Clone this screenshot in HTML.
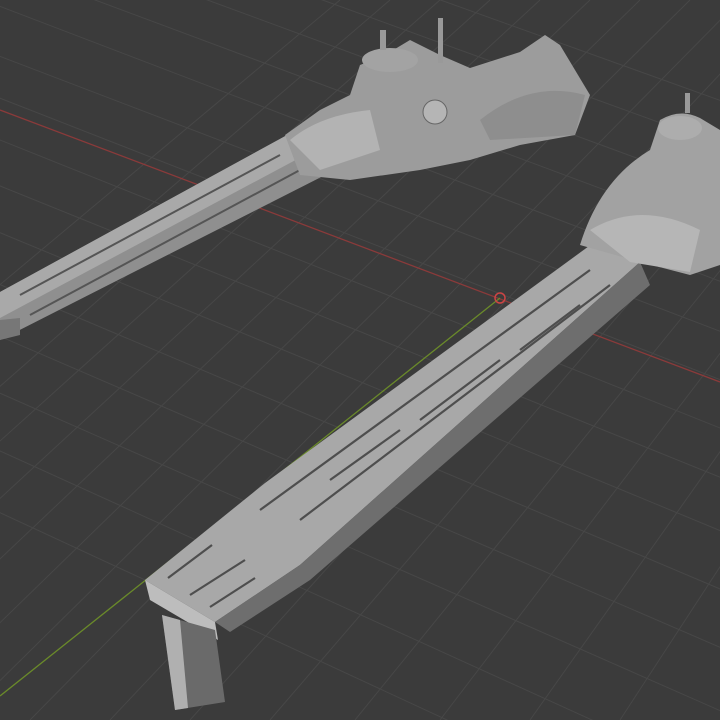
<!DOCTYPE html>
<html><head><style>html,body{margin:0;padding:0;background:#3b3b3b;overflow:hidden;width:720px;height:720px}svg{display:block;overflow:hidden;position:absolute;left:0;top:0}</style></head>
<body>
<svg width="720" height="720" viewBox="0 0 720 720" xmlns="http://www.w3.org/2000/svg">
<rect width="720" height="720" fill="#3b3b3b"/>
<g stroke="#474747" stroke-width="1">
<line x1="-200" y1="-20" x2="900" y2="400"/><line x1="-200" y1="20" x2="900" y2="450"/>
<line x1="-200" y1="60" x2="900" y2="500"/><line x1="-200" y1="105" x2="900" y2="550"/>
<line x1="-200" y1="150" x2="900" y2="605"/><line x1="-200" y1="200" x2="900" y2="665"/>
<line x1="-200" y1="250" x2="900" y2="725"/><line x1="-200" y1="305" x2="900" y2="790"/>
<line x1="-200" y1="360" x2="900" y2="860"/><line x1="-200" y1="420" x2="900" y2="930"/>
<line x1="-200" y1="-70" x2="900" y2="350"/><line x1="-200" y1="-110" x2="900" y2="300"/>
<line x1="-200" y1="-150" x2="900" y2="255"/><line x1="-200" y1="-190" x2="900" y2="210"/>
<line x1="-200" y1="-230" x2="900" y2="165"/>
<line x1="-100" y1="720" x2="640" y2="0"/><line x1="-40" y1="720" x2="690" y2="0"/>
<line x1="30" y1="720" x2="740" y2="0"/><line x1="110" y1="720" x2="790" y2="0"/>
<line x1="190" y1="720" x2="840" y2="0"/><line x1="270" y1="720" x2="890" y2="0"/>
<line x1="355" y1="720" x2="940" y2="0"/><line x1="440" y1="720" x2="990" y2="0"/>
<line x1="530" y1="720" x2="1040" y2="0"/><line x1="620" y1="720" x2="1090" y2="0"/>
<line x1="-170" y1="720" x2="590" y2="0"/><line x1="-240" y1="720" x2="540" y2="0"/>
<line x1="-310" y1="720" x2="490" y2="0"/><line x1="-380" y1="720" x2="440" y2="0"/>
<line x1="-450" y1="720" x2="390" y2="0"/><line x1="-520" y1="720" x2="340" y2="0"/>
</g>
<line x1="0" y1="110" x2="720" y2="382" stroke="#8a3a3a" stroke-width="1.3"/>
<line x1="0" y1="696" x2="500" y2="298" stroke="#6a8a2a" stroke-width="1.3"/>

<polygon points="0,292 300,128 335,170 0,340" fill="#8f8f8f"/>
<polygon points="0,292 300,128 318,148 0,318" fill="#a9a9a9"/>
<g stroke="#555" stroke-width="2"><line x1="20" y1="295" x2="280" y2="155"/><line x1="30" y1="315" x2="300" y2="170"/></g>
<polygon points="285,135 320,110 350,95 360,65 385,55 410,40 440,55 470,68 520,52 545,35 560,45 590,95 575,135 520,145 470,160 420,170 350,180 300,175" fill="#9c9c9c"/>
<path d="M290,140 Q320,115 370,110 L380,150 L320,170Z" fill="#b3b3b3"/>
<path d="M480,120 Q530,80 585,95 L575,135 L490,140Z" fill="#8e8e8e"/>
<ellipse cx="390" cy="60" rx="28" ry="12" fill="#a3a3a3"/>
<circle cx="435" cy="112" r="12" fill="#b5b5b5" stroke="#666"/>
<rect x="438" y="18" width="5" height="45" fill="#999"/>
<rect x="380" y="30" width="6" height="20" fill="#999"/>
<polygon points="0,320 20,318 20,335 0,340" fill="#777"/>

<polygon points="145,580 265,483 600,238 640,262 300,565 215,622" fill="#a8a8a8"/>
<polygon points="215,622 300,565 640,262 650,285 310,580 230,632" fill="#6e6e6e"/>
<polygon points="145,580 215,622 218,640 150,600" fill="#bdbdbd"/>
<g stroke="#4e4e4e" stroke-width="2.2">
<line x1="168" y1="578" x2="212" y2="545"/><line x1="190" y1="595" x2="245" y2="560"/>
<line x1="210" y1="607" x2="255" y2="578"/><line x1="260" y1="510" x2="590" y2="270"/>
<line x1="300" y1="520" x2="610" y2="285"/><line x1="330" y1="480" x2="400" y2="430"/>
<line x1="420" y1="420" x2="500" y2="360"/><line x1="520" y1="350" x2="580" y2="305"/>
</g>
<polygon points="162,615 215,630 225,702 175,710" fill="#6a6a6a"/>
<polygon points="162,615 180,620 188,708 175,710" fill="#b0b0b0"/>
<path d="M580,245 Q600,180 650,150 L660,120 Q680,108 700,118 L720,130 L720,265 L690,275 L640,262 Z" fill="#a2a2a2"/>
<path d="M590,230 Q640,200 700,230 L690,272 L630,262Z" fill="#b6b6b6"/>
<ellipse cx="680" cy="128" rx="22" ry="12" fill="#adadad"/>
<rect x="685" y="93" width="5" height="20" fill="#999"/>
<circle cx="500" cy="298" r="5" fill="none" stroke="#c44" stroke-width="1.5"/>
</svg>
</body></html>
